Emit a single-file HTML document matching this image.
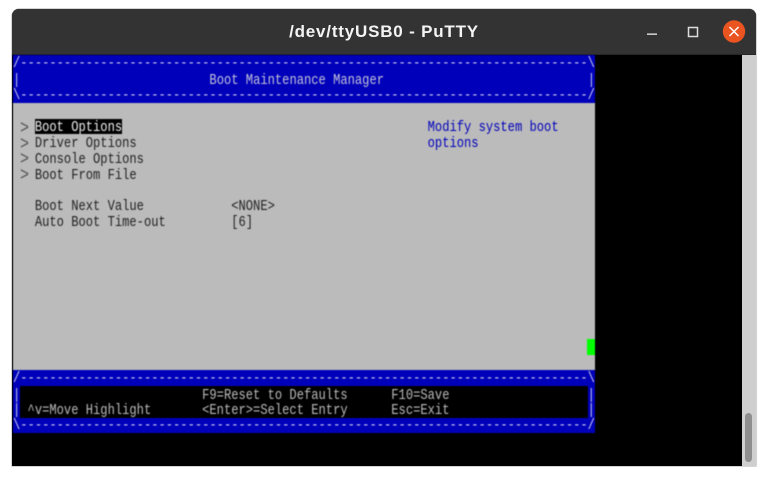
<!DOCTYPE html>
<html><head><meta charset="utf-8">
<style>
html,body{margin:0;padding:0;background:#fff;width:768px;height:478px;overflow:hidden}
#win{position:absolute;left:12px;top:9px;width:744px;height:457px;background:#000;border-radius:7px 7px 0 0;overflow:hidden;box-shadow:0 0 0 .5px #aaa}
#bar{position:absolute;left:12px;top:9px;width:744px;height:45px;background:#333;border-radius:7px 7px 0 0;border-bottom:1px solid #262626}
#title{position:absolute;left:272px;width:224px;top:20px;text-align:center;font:bold 17px/24px "Liberation Sans",sans-serif;color:#f4f4f4;letter-spacing:.8px;white-space:nowrap}
#sb{position:absolute;left:742px;top:55px;width:14px;height:411px;background:#cfcfcf}
#th{position:absolute;left:745px;top:413px;width:7px;height:49px;background:#8e8e8e;border-radius:4px}
#term{position:absolute;left:13px;top:55px;width:582px;height:378px;background:#bbb;filter:blur(.45px)}
.b{position:absolute;left:0;width:582px;background:#0000bb}
.k{position:absolute;background:#000}
pre{position:absolute;left:0;margin:0;font:14.5px/15.75px "Liberation Mono",monospace;height:15.75px;white-space:pre;transform:scaleX(.836);transform-origin:0 0}
pre.a{font-size:18px;left:6.5px;color:#555}
.w{color:#c8c8e8}.g{color:#222}.l{color:#bbb}.u{color:#0000bb}
</style></head><body>
<div id="win"></div>
<div id="bar"></div>
<div id="title">/dev/ttyUSB0 - PuTTY</div>
<svg style="position:absolute;left:640px;top:15px" width="110" height="34" viewBox="640 15 110 34">
<rect x="647" y="33.5" width="10" height="1.3" fill="#eee"/>
<rect x="688.5" y="27.5" width="9" height="9" fill="none" stroke="#ddd" stroke-width="1.5"/>
<circle cx="734" cy="31.5" r="11.2" fill="#e95420"/>
<path d="M729.5 27 L738.5 36 M738.5 27 L729.5 36" stroke="#fff" stroke-width="1.5" fill="none"/>
</svg>
<div id="sb"></div><div id="th"></div>
<div id="term">
<div class="b" style="top:0;height:47.5px"></div>
<div class="b" style="top:315px;height:63px"></div>
<div class="k" style="left:7.3px;top:331px;width:567.5px;height:31.5px"></div>
<div class="k" style="left:22px;top:64px;width:87px;height:15px"></div>
<div style="position:absolute;left:574px;top:284px;width:8px;height:16px;background:#0f0"></div>
<pre class="w" style="top:1.5px">/------------------------------------------------------------------------------\</pre>
<pre class="w" style="top:18.5px">|                          <span style="color:#c4c4d8">Boot Maintenance Manager</span>                            |</pre>
<pre class="w" style="top:33.5px">\------------------------------------------------------------------------------/</pre>
<pre class="g" style="top:66px">   <span style="color:#eee">Boot Options</span>                                          <span class="u">Modify system boot</span></pre>
<pre class="g" style="top:82px">   Driver Options                                        <span class="u">options</span></pre>
<pre class="g" style="top:97.5px">   Console Options</pre>
<pre class="g" style="top:113.5px">   Boot From File</pre>
<pre class="a" style="top:66.5px">&gt;</pre>
<pre class="a" style="top:82.5px">&gt;</pre>
<pre class="a" style="top:98px">&gt;</pre>
<pre class="a" style="top:113.5px">&gt;</pre>
<pre class="g" style="top:144.5px">   Boot Next Value            &lt;NONE&gt;</pre>
<pre class="g" style="top:160.5px">   Auto Boot Time-out         [6]</pre>
<pre class="w" style="top:316.5px">/------------------------------------------------------------------------------\</pre>
<pre class="w" style="top:333.5px">|<span class="l">                         F9=Reset to Defaults      F10=Save</span>                   |</pre>
<pre class="w" style="top:349px">|<span class="l"> ^v=Move Highlight       &lt;Enter&gt;=Select Entry      Esc=Exit</span>                   |</pre>
<pre class="w" style="top:363.5px">\------------------------------------------------------------------------------/</pre>
</div>
</body></html>
